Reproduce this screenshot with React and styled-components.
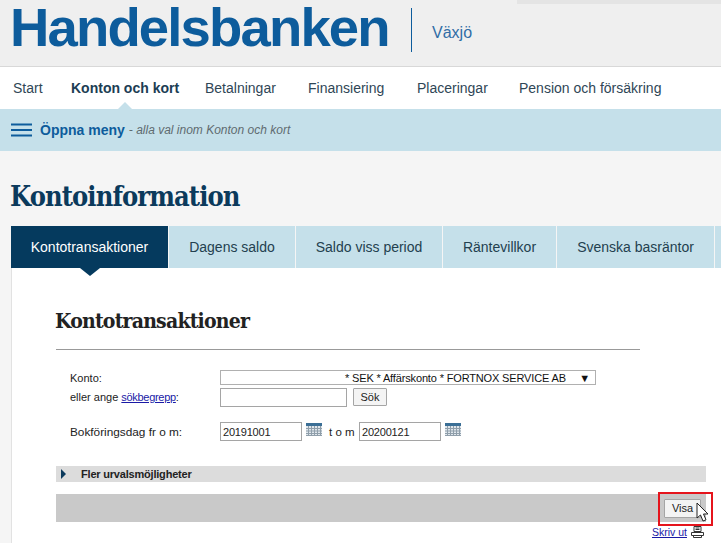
import React from "react";
import styled, { createGlobalStyle } from "styled-components";

const GlobalStyle = createGlobalStyle`
  html, body {
    margin: 0;
    height: 543px;
    overflow: hidden;
    background: #f5f5f5;
    font-family: "Liberation Sans", Arial, sans-serif;
  }
`;

const Header = styled.header`
  position: relative;
  height: 66px;
  display: flex;
  align-items: center;
  padding-left: 10px;
  background: #efefef;
  border-bottom: 1px solid #d8d8d8;
`;

const TopStrip = styled.div`
  position: absolute;
  top: 0;
  right: 0;
  width: 204px;
  height: 4px;
  background: #e4e4e4;
`;

const Logo = styled.div`
  width: 401px;
  margin-bottom: 10px;
  font-size: 54.5px;
  font-weight: 700;
  letter-spacing: -1.85px;
  line-height: 46px;
  color: #0d5c9c;
`;

const Divider = styled.div`
  width: 1px;
  height: 44px;
  margin-bottom: 6px;
  background: #0d5c9c;
`;

const City = styled.div`
  margin-left: 20px;
  font-size: 16px;
  color: #2f6da6;
`;

const Nav = styled.nav`
  height: 42px;
  display: flex;
  align-items: center;
  padding-left: 13px;
  background: #fff;
`;

const NavItem = styled.a`
  position: relative;
  flex: none;
  width: ${(p) => p.$width}px;
  line-height: 42px;
  font-size: 14px;
  font-weight: ${(p) => (p.$current ? 700 : 400)};
  color: ${(p) => (p.$current ? "#1c3d54" : "#2f4656")};

  ${(p) =>
    p.$current &&
    `&::after {
      content: "";
      position: absolute;
      left: 47px;
      bottom: 0;
      border: 7px solid transparent;
      border-top: 0;
      border-bottom-color: #c5e0ea;
    }`}
`;

const MenuBar = styled.div`
  height: 42px;
  display: flex;
  align-items: center;
  padding-left: 11px;
  background: #c5e0ea;
`;

const Burger = styled.svg`
  width: 21px;
  height: 14px;
  margin-right: 8px;
`;

const MenuLabel = styled.span`
  font-size: 14px;
  font-weight: 700;
  color: #0d5c9c;
`;

const MenuHint = styled.span`
  margin-left: 4px;
  font-size: 12px;
  font-style: italic;
  color: #5f6b70;
`;

const Main = styled.main`
  padding-left: 11px;
`;

const PageTitle = styled.h1`
  margin: 0 0 0 -1px;
  padding-top: 29px;
  height: 46px;
  font-family: "DejaVu Serif", serif;
  font-stretch: condensed;
  font-size: 27px;
  font-weight: 700;
  letter-spacing: -0.9px;
  line-height: 34px;
  color: #0b3a5c;
`;

const Tabs = styled.div`
  display: flex;
  height: 42px;
`;

const Tab = styled.div`
  position: relative;
  flex: none;
  box-sizing: border-box;
  width: ${(p) => p.$width}px;
  border-right: 1px solid #f5f5f5;
  line-height: 42px;
  text-align: center;
  font-size: 14px;
  background: ${(p) => (p.$active ? "#053a5e" : "#c5e0ea")};
  color: ${(p) => (p.$active ? "#fff" : "#23404f")};

  ${(p) =>
    p.$active &&
    `&::after {
      content: "";
      position: absolute;
      left: 69px;
      top: 42px;
      border: 10px solid transparent;
      border-bottom: 0;
      border-top: 8px solid #053a5e;
    }`}
`;

const Panel = styled.section`
  box-sizing: border-box;
  height: 275px;
  padding: 30px 15px 0 44px;
  border-left: 1px solid #e2e2e2;
  background: #fff;
`;

const PanelTitle = styled.h2`
  margin: 0;
  height: 51px;
  width: 584px;
  border-bottom: 1px solid #999;
  font-family: "DejaVu Serif", serif;
  font-stretch: condensed;
  font-size: 21px;
  font-weight: 700;
  letter-spacing: -0.8px;
  line-height: 46px;
  text-indent: -1px;
  color: #222;
`;

const Form = styled.form`
  display: grid;
  grid-template-columns: 150px 1fr;
  padding: 20px 0 0 14px;
  font-size: 11px;
  color: #222;
`;

const Label = styled.label`
  display: flex;
  align-items: center;
  height: ${(p) => p.$height}px;
  margin-bottom: ${(p) => p.$after || 0}px;
  font-size: ${(p) => p.$size || 11}px;

  a {
    margin-left: 3px;
    letter-spacing: -0.3px;
    color: #1a1aa6;
  }
`;

const Field = styled.div`
  display: flex;
  align-items: center;
  height: ${(p) => p.$height}px;
  margin-bottom: ${(p) => p.$after || 0}px;
`;

const SelectBox = styled.div`
  position: relative;
  box-sizing: border-box;
  width: 376px;
  height: 15px;
  padding-left: 124px;
  border: 1px solid #b0b0b0;
  font-size: 11px;
  letter-spacing: -0.15px;
  line-height: 14px;
  white-space: nowrap;
  color: #111;

  &::after {
    content: "▼";
    position: absolute;
    right: 5px;
    top: 0;
    font-size: 11px;
  }
`;

const TextInput = styled.div`
  box-sizing: border-box;
  flex: none;
  width: ${(p) => p.$width}px;
  height: 19px;
  padding-left: 2px;
  border: 1px solid #a5a5a5;
  font-size: 11px;
  letter-spacing: -0.2px;
  line-height: 18px;
  color: #222;
`;

const Button = styled.button`
  height: 18px;
  padding: 0;
  border: 1px solid #a5a5a5;
  border-radius: 1px;
  background: #f4f4f4;
  font-family: inherit;
  font-size: 11px;
  line-height: 14px;
  color: #222;
`;

const SearchButton = styled(Button)`
  width: 34px;
  margin-left: 6px;
`;

const CalendarIcon = styled.svg`
  flex: none;
  width: 16px;
  height: 13px;
  margin: -5px 7px 0 4px;
`;

const Until = styled.span`
  width: 30px;
  font-size: 11.5px;
`;

const MoreBar = styled.div`
  display: flex;
  align-items: center;
  height: 16px;
  margin-top: 25px;
  padding-left: 5px;
  background: #dcdcdc;
  font-size: 11px;
  font-weight: 700;
  letter-spacing: -0.2px;
  color: #222;
`;

const Arrow = styled.span`
  width: 0;
  height: 0;
  margin-right: 15px;
  border-left: 5px solid #0b3a5c;
  border-top: 5px solid transparent;
  border-bottom: 5px solid transparent;
`;

const ActionBar = styled.div`
  position: relative;
  display: flex;
  justify-content: flex-end;
  align-items: center;
  height: 28px;
  margin-top: 12px;
  padding-right: 5px;
  background: #c9c9c9;
`;

const ShowButton = styled(Button)`
  height: 19px;
  width: 37px;
`;

const Highlight = styled.div`
  position: absolute;
  right: -7px;
  top: -2px;
  width: 51px;
  height: 30px;
  border: 2px solid #e5141c;
`;

const Cursor = styled.svg`
  position: absolute;
  right: -3px;
  top: 8px;
  width: 13px;
  height: 21px;
`;

const PrintRow = styled.div`
  display: flex;
  justify-content: flex-end;
  align-items: center;
  gap: 4px;
  height: 20px;
  padding-right: 2px;
  font-size: 10.5px;

  a {
    color: #1a1aa6;
    text-decoration: underline;
  }
`;

const PrinterIcon = styled.svg`
  width: 13px;
  height: 12px;
`;

const navItems = [
  ["Start", 58],
  ["Konton och kort", 134, true],
  ["Betalningar", 103],
  ["Finansiering", 109],
  ["Placeringar", 102],
  ["Pension och försäkring", 160],
];

const tabs = [
  ["Kontotransaktioner", 158, true],
  ["Dagens saldo", 127],
  ["Saldo viss period", 147],
  ["Räntevillkor", 114],
  ["Svenska basräntor", 158],
  ["", 40],
];

const Calendar = () => (
  <CalendarIcon viewBox="0 0 16 13">
    <rect width="16" height="3" fill="#3b6f96" />
    <rect y="3" width="16" height="10" fill="#dfe6ec" />
    <path
      d="M0 5.5h16M0 8h16M0 10.5h16M0 12.5h16M2.5 3v10M5.5 3v10M8.5 3v10M11.5 3v10M14.5 3v10"
      stroke="#8f9eaa"
      strokeWidth="1"
    />
  </CalendarIcon>
);

export default function App() {
  return (
    <>
      <GlobalStyle />
      <Header>
        <TopStrip />
        <Logo>Handelsbanken</Logo>
        <Divider />
        <City>Växjö</City>
      </Header>
      <Nav>
        {navItems.map(([label, width, current]) => (
          <NavItem key={label} $width={width} $current={current}>
            {label}
          </NavItem>
        ))}
      </Nav>
      <MenuBar>
        <Burger viewBox="0 0 21 14">
          <path d="M0 1.5h21M0 7h21M0 12.5h21" stroke="#0d5c9c" strokeWidth="2" />
        </Burger>
        <MenuLabel>Öppna meny</MenuLabel>
        <MenuHint>- alla val inom Konton och kort</MenuHint>
      </MenuBar>
      <Main>
        <PageTitle>Kontoinformation</PageTitle>
        <Tabs>
          {tabs.map(([label, width, active], i) => (
            <Tab key={i} $width={width} $active={active}>
              {label}
            </Tab>
          ))}
        </Tabs>
        <Panel>
          <PanelTitle>Kontotransaktioner</PanelTitle>
          <Form>
            <Label $height={15} $after={3}>Konto:</Label>
            <Field $height={15} $after={3}>
              <SelectBox>* SEK * Affärskonto * FORTNOX SERVICE AB</SelectBox>
            </Field>
            <Label $height={18} $after={16}>
              eller ange <a href="#sok">sökbegrepp</a>:
            </Label>
            <Field $height={18} $after={16}>
              <TextInput $width={127} />
              <SearchButton type="button">Sök</SearchButton>
            </Field>
            <Label $height={19} $size={11.8}>Bokföringsdag fr o m:</Label>
            <Field $height={19}>
              <TextInput $width={82}>20191001</TextInput>
              <Calendar />
              <Until>t o m</Until>
              <TextInput $width={82}>20200121</TextInput>
              <Calendar />
            </Field>
          </Form>
          <MoreBar>
            <Arrow />
            Fler urvalsmöjligheter
          </MoreBar>
          <ActionBar>
            <ShowButton type="button">Visa</ShowButton>
            <Highlight />
            <Cursor viewBox="0 0 13 21">
              <path
                d="M1 1v15l3.5-3 2.5 6 3-1.2-2.5-5.8H12z"
                fill="#fff"
                stroke="#222"
                strokeWidth="1"
              />
            </Cursor>
          </ActionBar>
          <PrintRow>
            <a href="#print">Skriv ut</a>
            <PrinterIcon viewBox="0 0 13 12">
              <path
                d="M3 .5h7v5H3zM.5 6.5h12v3H.5zM2.5 9.5h8v2h-8zM4.5 2h4M4.5 3.5h4"
                fill="none"
                stroke="#333"
                strokeWidth="1"
              />
            </PrinterIcon>
          </PrintRow>
        </Panel>
      </Main>
    </>
  );
}
